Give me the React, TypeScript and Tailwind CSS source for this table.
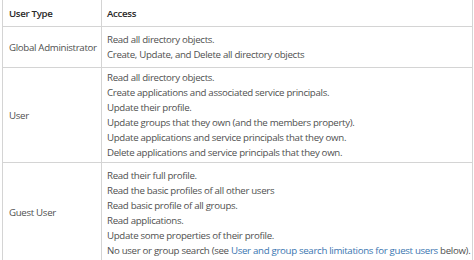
import React from "react";

const rows: { type: string; lines: React.ReactNode[]; cls: string }[] = [
  {
    type: "Global Administrator",
    cls: "h-[41px]",
    lines: ["Read all directory objects.", "Create, Update, and Delete all directory objects"],
  },
  {
    type: "User",
    cls: "h-[95px]",
    lines: [
      "Read all directory objects.",
      "Create applications and associated service principals.",
      "Update their profile.",
      "Update groups that they own (and the members property).",
      "Update applications and service principals that they own.",
      "Delete applications and service principals that they own.",
    ],
  },
  {
    type: "Guest User",
    cls: "h-[100px]",
    lines: [
      "Read their full profile.",
      "Read the basic profiles of all other users",
      "Read basic profile of all groups.",
      "Read applications.",
      "Update some properties of their profile.",
      <>
        No user or group search (see{" "}
        <span className="text-[#3a75b0]">User and group search limitations for guest users</span> below).
      </>,
    ],
  },
];

export default function App() {
  return (
    <div
      className="w-[474px] h-[260px] overflow-hidden bg-white text-[#505050] text-[9.7px] leading-[15px] tracking-[-0.32px]"
      style={{ fontFamily: '"Open Sans", sans-serif' }}
    >
      <div className="ml-[2px] w-[471px] border-l border-r border-[#d4d4d4]">
        <div className="flex h-[27px] border-b border-[#d4d4d4] font-semibold text-[#2a2a2a]">
          <div className="w-[99px] shrink-0 border-r border-[#d4d4d4] pl-[6px] flex items-center">User Type</div>
          <div className="flex-1 pl-[5px] flex items-center">Access</div>
        </div>
        {rows.map((r) => (
          <div key={r.type} className={`flex border-b border-[#d4d4d4] ${r.cls}`}>
            <div className="w-[99px] shrink-0 border-r border-[#d4d4d4] pl-[6px] flex items-center whitespace-nowrap">{r.type}</div>
            <div className="flex-1 min-w-0 pl-[5px] flex flex-col justify-center">
              {r.lines.map((l, i) => (
                <div key={i} className="whitespace-nowrap">{l}</div>
              ))}
            </div>
          </div>
        ))}
      </div>
    </div>
  );
}
